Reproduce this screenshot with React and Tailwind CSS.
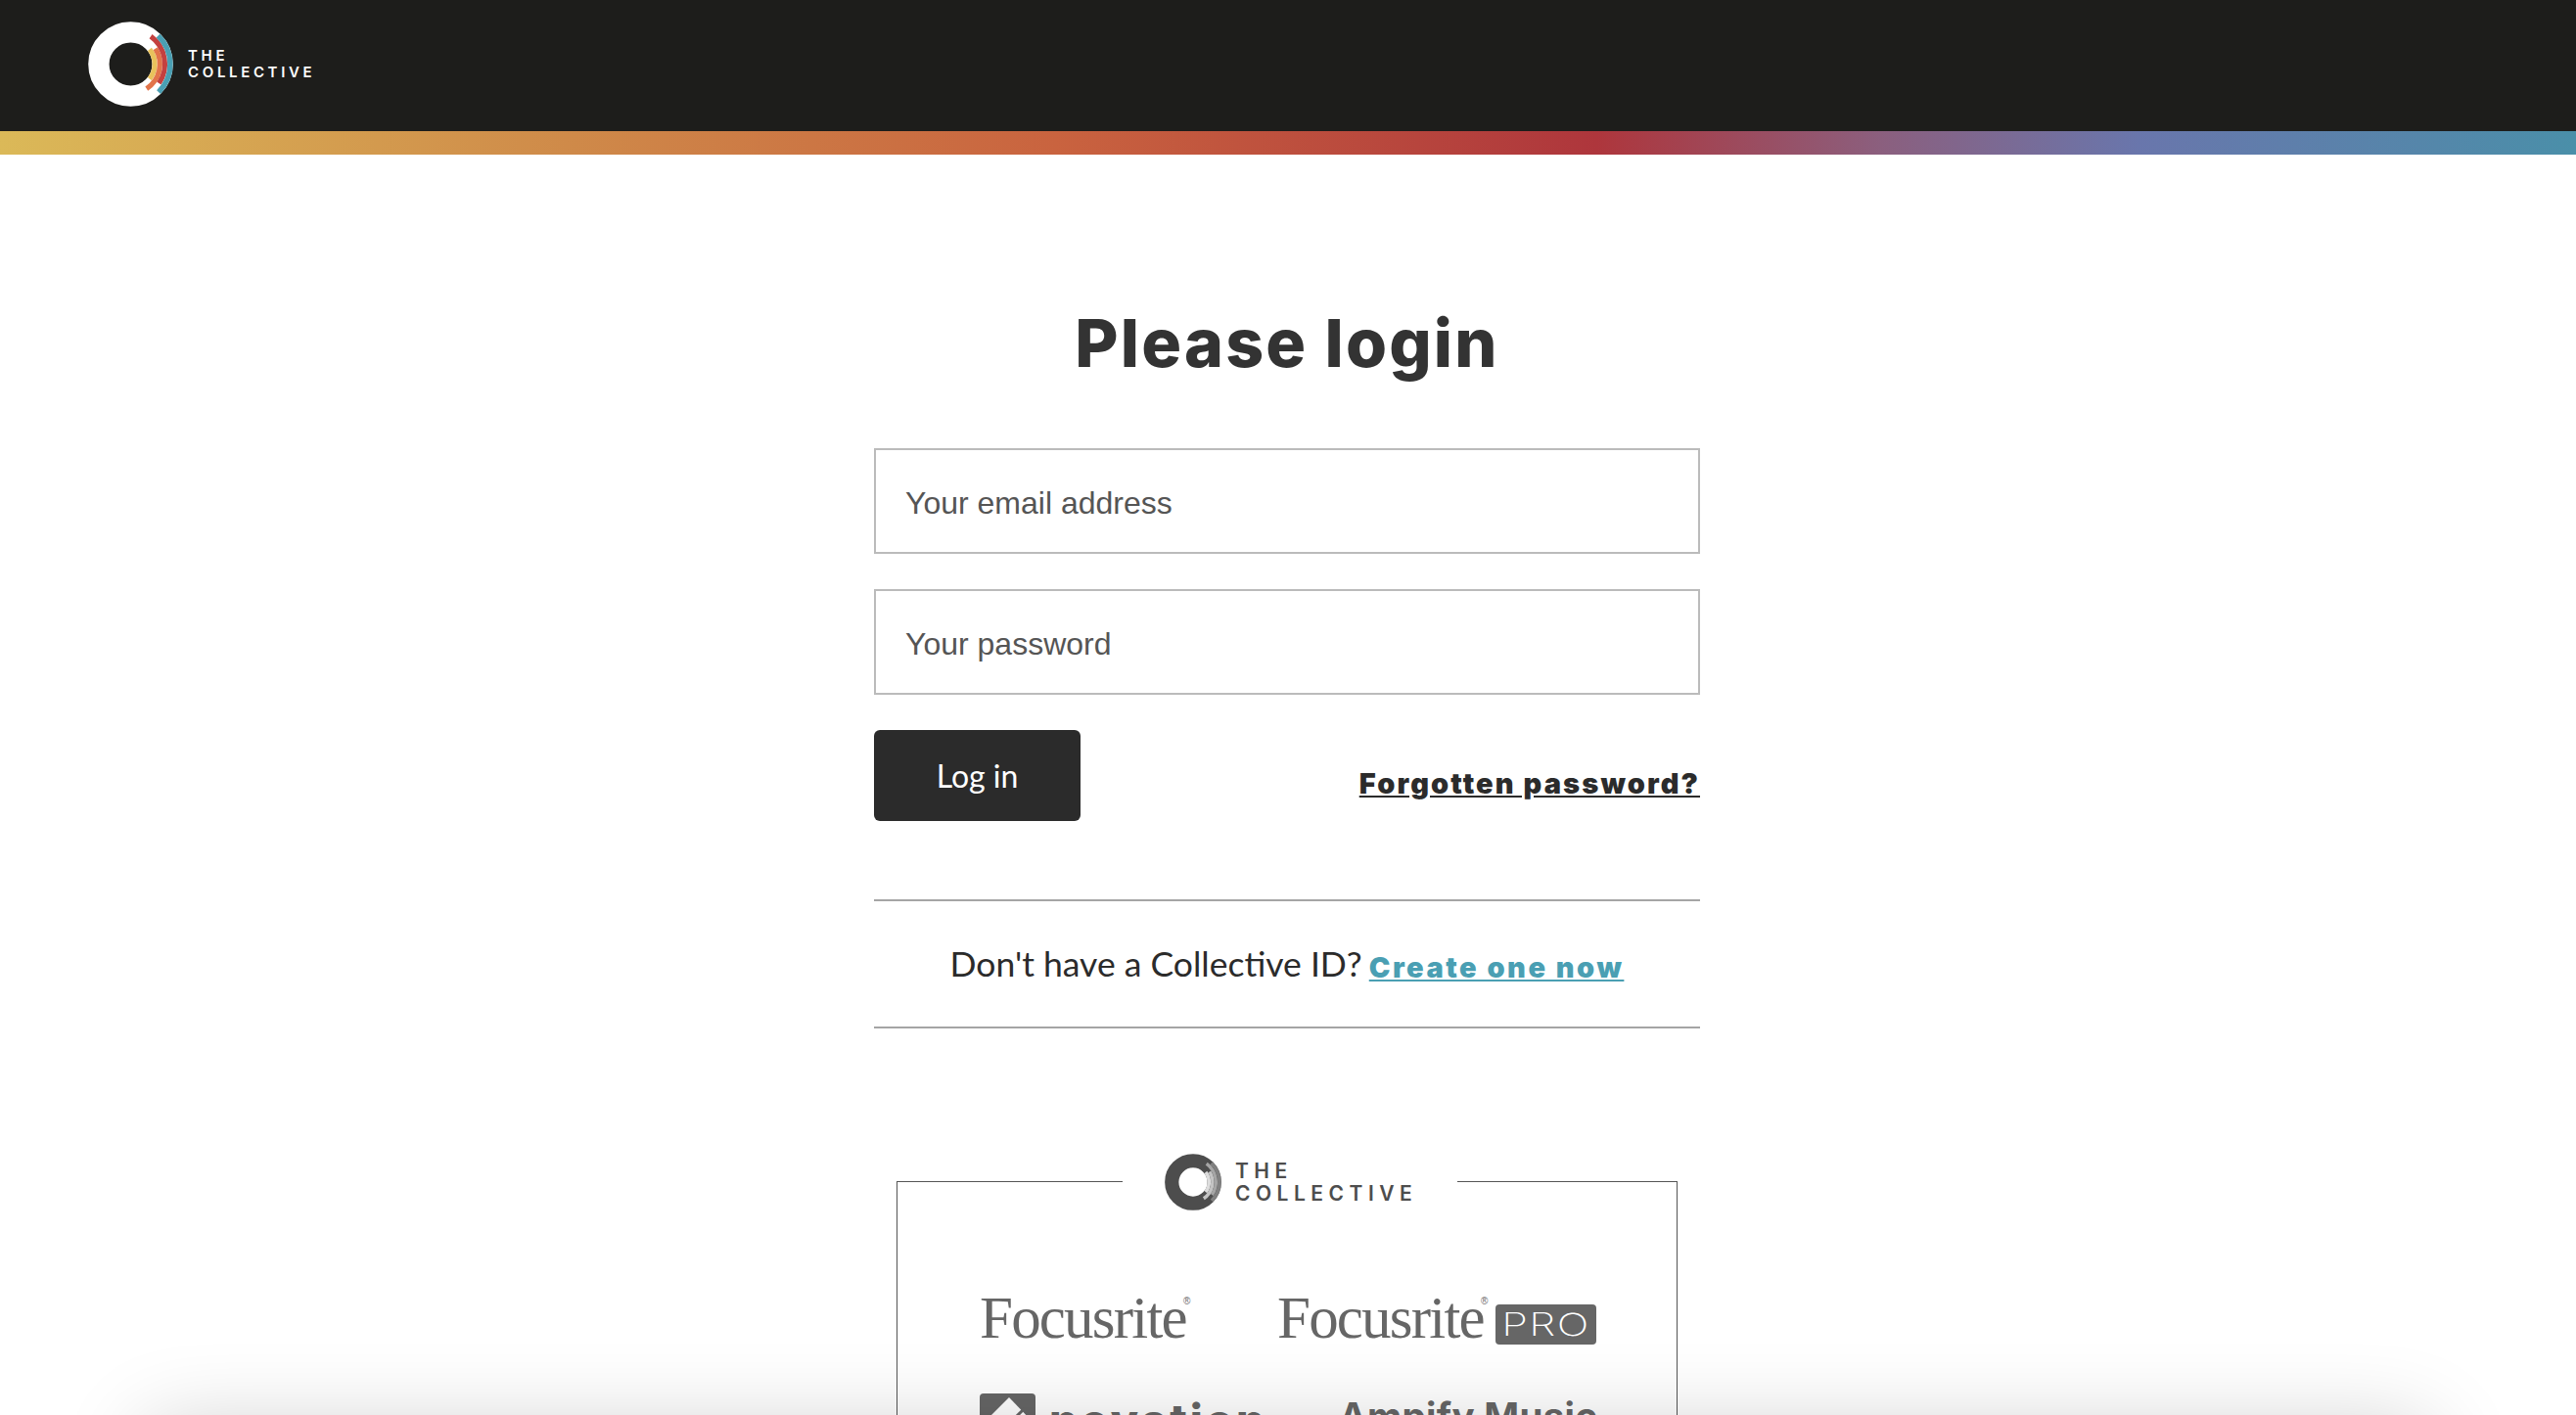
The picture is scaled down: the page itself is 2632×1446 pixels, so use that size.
const polar = (r, deg) => {
  const a = (deg * Math.PI) / 180;
  return [44 + r * Math.cos(a), 44 + r * Math.sin(a)];
};
const arc = (r, a1, a2) => {
  const [x1, y1] = polar(r, a1);
  const [x2, y2] = polar(r, a2);
  return `M${x1.toFixed(2)} ${y1.toFixed(2)}A${r} ${r} 0 0 1 ${x2.toFixed(2)} ${y2.toFixed(2)}`;
};

function Ring({ size, ring, colors }) {
  return (
    <svg width={size} height={size} viewBox="0 0 88 88" className="shrink-0">
      <circle cx="44" cy="44" r="33" fill="none" stroke={ring} strokeWidth="21.6" />
      <path d={arc(24.9, -38, 38)} fill="none" stroke={colors[0]} strokeWidth="5.2" />
      <path d={arc(30.2, -32, 57)} fill="none" stroke={colors[1]} strokeWidth="5.2" />
      <path d={arc(35.4, -54, 34)} fill="none" stroke={colors[2]} strokeWidth="5.2" />
      <path d={arc(40.9, -46, 45)} fill="none" stroke={colors[3]} strokeWidth="5.6" />
    </svg>
  );
}

function Focusrite() {
  return (
    <span className="relative block w-[209px] font-['Liberation_Serif',serif] text-[61px] leading-[61px] tracking-[-1.8px] whitespace-nowrap text-[#666]">
      Focusrite
      <sup className="absolute top-[9px] left-[208px] font-['Liberation_Sans',sans-serif] text-[10px] leading-none tracking-normal">®</sup>
    </span>
  );
}

export default function App() {
  return (
    <div className="relative h-[1446px] overflow-hidden bg-white">
      <header className="flex h-[134px] items-center gap-[15px] bg-[#1d1d1b] pb-[4px] pl-[90px]">
        <Ring size={87} ring="#ffffff" colors={["#e8c25c", "#e2744a", "#c4403f", "#4a9fb3"]} />
        <div className="font-['Inter',sans-serif] text-[15px] leading-[17px] font-semibold tracking-[3.65px] text-white">
          <div>THE</div>
          <div>COLLECTIVE</div>
        </div>
      </header>
      <div className="h-[24px] bg-[linear-gradient(90deg,#dbb958_0%,#cf8a49_22%,#c9633f_41%,#ae363c_62%,#8b5f7e_73%,#6976ac_83%,#4a8fa9_100%)]" />

      <main className="ml-[893px] flex w-[844px] flex-col">
        <h1 className="mt-[160px] mb-[76px] text-center font-['Inter',sans-serif] text-[68px] leading-[64px] font-extrabold tracking-[2.2px] text-[#333]">
          Please login
        </h1>
        <form className="flex flex-col gap-[36px]">
          <input
            placeholder="Your email address"
            className="h-[108px] w-full border-2 border-[#bbb] px-[30px] pt-[4px] font-['Liberation_Sans',sans-serif] text-[32px] outline-none placeholder:text-[#555]"
          />
          <input
            placeholder="Your password"
            className="h-[108px] w-full border-2 border-[#bbb] px-[30px] pt-[4px] font-['Liberation_Sans',sans-serif] text-[32px] outline-none placeholder:text-[#555]"
          />
          <div className="flex items-center justify-between">
            <button
              type="button"
              className="h-[93px] w-[211px] rounded-[6px] bg-[#2b2b2b] font-['Lato',sans-serif] text-[32px] text-white"
            >
              Log in
            </button>
            <a className="mt-[16px] font-['Inter',sans-serif] text-[29px] font-black tracking-[2.1px] text-[#2b2b2b] underline">
              Forgotten password?
            </a>
          </div>
        </form>
        <div className="mt-[80px] flex h-[132px] items-center justify-center gap-[7px] border-y-2 border-[#a5a5a5] font-['Lato',sans-serif] text-[35.5px] text-[#2b2b2b]">
          <span>Don't have a Collective ID?</span>
          <a className="mt-[7px] font-['Inter',sans-serif] text-[29px] font-black tracking-[2.5px] text-[#4a9fb3] underline">
            Create one now
          </a>
        </div>

        <section className="relative mx-[23px] mt-[156px] h-[500px] border border-[#555] pt-[108px] pl-[84px]">
          <div className="absolute top-[-29px] left-[230px] flex h-[58px] w-[342px] items-center gap-[14px] bg-white pl-[43px]">
            <Ring size={58} ring="#4d4d4d" colors={["#dddddd", "#c4c4c4", "#a5a5a5", "#808080"]} />
            <div className="font-['Inter',sans-serif] text-[21px] leading-[23px] font-semibold tracking-[5.5px] text-[#4d4d4d]">
              <div>THE</div>
              <div>COLLECTIVE</div>
            </div>
          </div>
          <div className="grid grid-cols-[304px_1fr]">
            <Focusrite />
            <div className="flex items-start">
              <Focusrite />
              <span className="mt-[17px] ml-[14px] flex h-[41px] w-[103px] shrink-0 items-center justify-center rounded-[4px] bg-[#666] font-['Inter',sans-serif] text-[32px] leading-none font-extralight text-white">
                <span className="inline-block scale-x-[1.35] tracking-[1px]">PRO</span>
              </span>
            </div>
          </div>
          <div className="mt-[47px] grid grid-cols-[304px_1fr]">
            <div className="flex items-start gap-[14px]">
              <svg width="57" height="57" viewBox="0 0 57 57" className="shrink-0">
                <rect width="57" height="57" rx="4" fill="#666" />
                <path d="M30 4 L2 32 L30 56 L55 30 Z" fill="#fff" />
                <path d="M46 15 L30 31" fill="none" stroke="#666" strokeWidth="3" />
              </svg>
              <span className="mt-[4px] font-['Inter',sans-serif] text-[46px] leading-[46px] font-extrabold tracking-[2.9px] text-[#666]">
                novation
              </span>
            </div>
            <span className="mt-[1px] ml-[63px] font-['Inter',sans-serif] text-[38.5px] leading-[44px] font-bold tracking-[0.3px] text-[#666]">
              Ampify Music
            </span>
          </div>
        </section>
      </main>

      <div className="absolute top-[1460px] right-[150px] left-[150px] h-[200px] bg-white shadow-[0_0_90px_rgba(0,0,0,0.2)]" />
    </div>
  );
}
